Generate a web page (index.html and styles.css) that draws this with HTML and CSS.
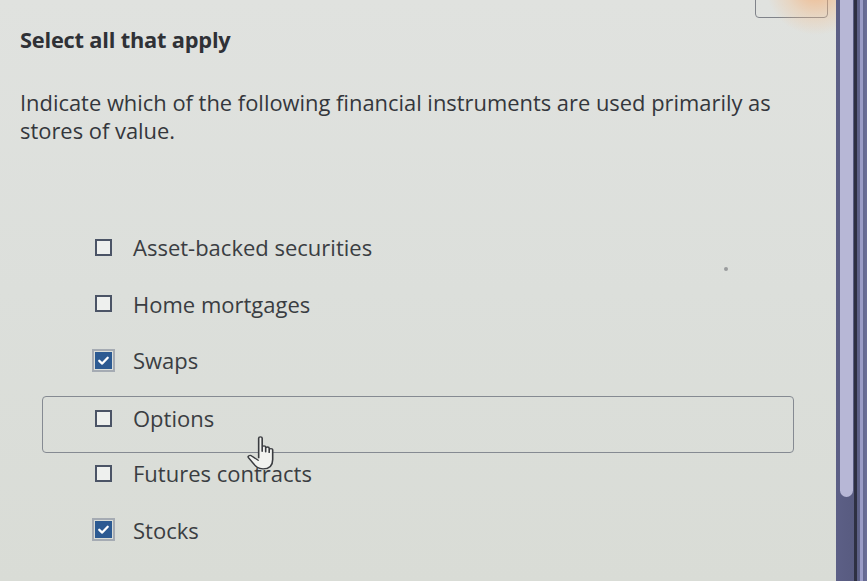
FILE: index.html
```html
<!DOCTYPE html>
<html lang="en">
<head>
<meta charset="utf-8">
<title>Select all that apply</title>
<link rel="stylesheet" href="styles.css">
</head>
<body>
<div class="screen">
  <main class="panel">
    <div class="corner-box"></div>
    <h1 class="title">Select all that apply</h1>
    <p class="question">Indicate which of the following financial instruments are used primarily as stores of value.</p>
    <ul class="options">
      <li class="option"><span class="box"></span><span class="label">Asset-backed securities</span></li>
      <li class="option"><span class="box"></span><span class="label">Home mortgages</span></li>
      <li class="option"><span class="box checked"><svg viewBox="0 0 16 16"><path d="M2.8 8.4 L6.4 11.8 L13.2 4.6" fill="none" stroke="#fff" stroke-width="2.8" stroke-linecap="round" stroke-linejoin="round"/></svg></span><span class="label">Swaps</span></li>
      <li class="option hover"><span class="box"></span><span class="label">Options</span></li>
      <li class="option"><span class="box"></span><span class="label">Futures contracts</span></li>
      <li class="option"><span class="box checked"><svg viewBox="0 0 16 16"><path d="M2.8 8.4 L6.4 11.8 L13.2 4.6" fill="none" stroke="#fff" stroke-width="2.8" stroke-linecap="round" stroke-linejoin="round"/></svg></span><span class="label">Stocks</span></li>
    </ul>
    <svg class="cursor" viewBox="1 2 18.5 29" preserveAspectRatio="none">
      <path d="M9 21 V4 C9 2.4 11.4 2.4 11.4 4 V15 V11.5 C11.4 10 13.8 10 13.8 11.5 V15.5 V12.5 C13.8 11 16.2 11 16.2 12.5 V16 V13.8 C16.2 12.4 18.6 12.4 18.6 13.8 V22 C18.6 27 16.5 30 12 30 C8.5 30 7 28 5 25 L2 20.5 C1.2 19.2 3 17.8 4.2 19 L9 23" fill="#f2f3f0" stroke="#3a3c40" stroke-width="1.1" stroke-linejoin="round"/>
    </svg>
    <span class="dot"></span>
  </main>
  <aside class="scroll">
    <div class="thumb"></div>
    <div class="edge"></div>
    <div class="stripe"></div>
  </aside>
</div>
</body>
</html>
```

FILE: styles.css
```css
html, body {
  margin: 0;
  padding: 0;
  height: 100%;
}
body {
  font-family: "Open Sans", "Liberation Sans", sans-serif;
  color: #34373c;
  background: #dcdedb;
  overflow: hidden;
}
.screen {
  display: flex;
  width: 867px;
  height: 581px;
}
.panel {
  position: relative;
  flex: 1;
  padding: 26px 0 0 20px;
  background: linear-gradient(180deg, #e0e2df 0%, #dcdfdb 50%, #d9dcd6 100%);
  box-sizing: border-box;
}
.corner-box {
  position: absolute;
  left: 755px;
  top: -6px;
  width: 71px;
  height: 22px;
  border: 1.5px solid #80838a;
  border-radius: 4px;
}
.panel::after {
  content: "";
  position: absolute;
  right: -30px;
  top: -60px;
  width: 100px;
  height: 95px;
  background: radial-gradient(closest-side, rgba(245, 170, 110, 0.75), rgba(245, 190, 140, 0.35) 60%, rgba(245, 200, 160, 0) 100%);
  pointer-events: none;
}
.title {
  margin: 0;
  font-size: 21.8px;
  font-weight: 700;
  line-height: 28px;
  letter-spacing: -0.2px;
  color: #2f3136;
}
.question {
  margin: 35px 0 0;
  width: 790px;
  font-size: 21.9px;
  line-height: 28px;
  color: #34373c;
}
.options {
  list-style: none;
  margin: 74px 0 0 22px;
  padding: 0;
}
.option {
  display: flex;
  align-items: center;
  gap: 21px;
  width: 752px;
  height: 56.5px;
  padding-left: 52px;
  box-sizing: border-box;
  border: 1.5px solid transparent;
  border-radius: 4px;
  font-size: 22px;
}
.option.hover {
  border-color: #858a92;
  margin-top: 7.5px;
  margin-bottom: -7.5px;
  padding-bottom: 12px;
}
.box {
  display: inline-flex;
  align-items: center;
  justify-content: center;
  width: 17px;
  height: 17px;
  box-sizing: border-box;
  border: 2px solid #4b5466;
  background: #eef0ee;
  flex: none;
}
.box.checked {
  background: #2c5a92;
  border-color: #2c5a92;
  outline: 2px solid #a5abb3;
  outline-offset: 1px;
}
.box svg {
  width: 15px;
  height: 15px;
}
.label {
  color: #3a3d42;
}
.cursor {
  position: absolute;
  left: 247px;
  top: 436px;
  width: 27px;
  height: 34px;
}
.dot {
  position: absolute;
  left: 724px;
  top: 267px;
  width: 4px;
  height: 4px;
  border-radius: 50%;
  background: #9a9c9e;
}
.scroll {
  position: relative;
  width: 31px;
  flex: none;
  background: linear-gradient(90deg, #5c5f86 0%, #585b80 60%, #6b6f98 100%);
}
.thumb {
  position: absolute;
  left: 4px;
  top: 0;
  width: 13px;
  height: 497px;
  background: #b7b7d6;
  border-radius: 0 0 7px 7px;
}
.edge {
  position: absolute;
  left: 18px;
  top: 0;
  width: 3px;
  height: 100%;
  background: #2e3042;
}
.stripe {
  position: absolute;
  left: 24px;
  top: 0;
  width: 3px;
  height: 100%;
  background: #9a9cc6;
}
```
